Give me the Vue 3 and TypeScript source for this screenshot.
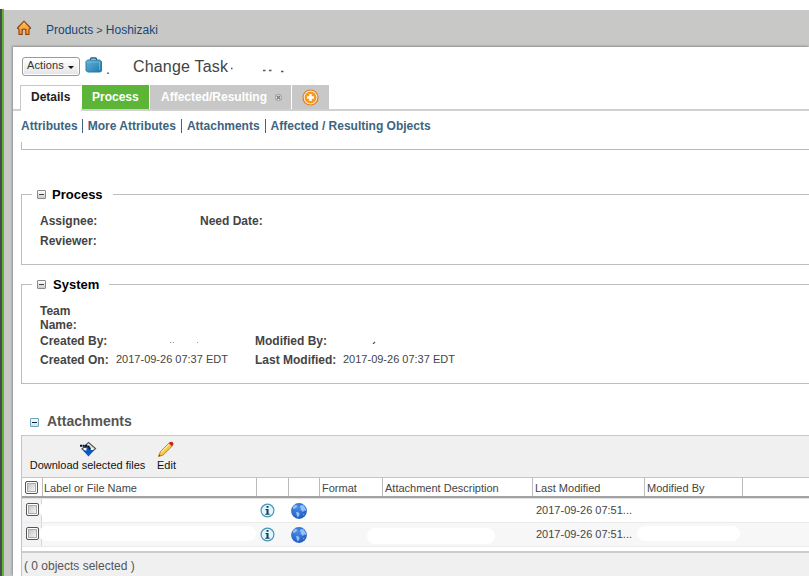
<script setup lang="ts">
const links: string[] = ['Attributes', 'More Attributes', 'Attachments', 'Affected / Resulting Objects']
const rows: { modified: string }[] = [{ modified: '2017-09-26 07:51...' }, { modified: '2017-09-26 07:51...' }]
</script>

<template>
  <div class="app">
    <div class="rail"></div>
    <div class="shell">
      <header class="crumbs">
        <svg class="home" width="16" height="16" viewBox="0 0 16 16">
          <defs>
            <linearGradient id="homeFill" x1="0" y1="0" x2="0" y2="1">
              <stop offset="0" stop-color="#ffc163" /><stop offset="1" stop-color="#f58a20" />
            </linearGradient>
          </defs>
          <path d="M8 1.2 14.6 8 13 9.3V14.5H9.8V9.2H6.2V14.5H3V9.3L1.4 8Z" fill="url(#homeFill)" stroke="#87420f" stroke-width="1.1" stroke-linejoin="round" />
        </svg>
        <a>Products</a><span class="sep">&gt;</span><a>Hoshizaki</a>
      </header>
      <main class="panel">
        <div class="titlebar">
          <button class="actions">Actions<i class="caret"></i></button>
          <svg class="case" width="18" height="16" viewBox="0 0 18 16">
            <defs>
              <linearGradient id="caseFill" x1="0" y1="0" x2="1" y2="1">
                <stop offset="0" stop-color="#65b4da" /><stop offset="1" stop-color="#1e78aa" />
              </linearGradient>
            </defs>
            <path d="M5.500 3.500V2Q5.500 1 6.500 1h4q1 0 1 1v1.500" fill="none" stroke="#245c78" stroke-width="1.3" />
            <path d="M1 4.500 2.500 3H14.500L16.500 4.500V14L15.500 15H2.500L1 13.500Z" fill="url(#caseFill)" stroke="#2b7da8" />
            <path d="M2 5H14.500V13" fill="none" stroke="#86c8e6" stroke-width=".6" />
          </svg>
          <span class="dot">.</span>
          <h1>Change Task</h1>
          <svg class="marks" width="56" height="8" viewBox="0 0 56 8">
            <path d="M1 3.500h1.500M33 5.500h2.500M39 5.500h2.500M51 6.500h2.500" stroke="#555" stroke-width="1.500" />
          </svg>
        </div>
        <nav class="tabs">
          <div class="tab current"><span>Details</span></div>
          <div class="tab process"><span>Process</span></div>
          <div class="tab affected">
            <span>Affected/Resulting</span>
            <svg width="7" height="7" viewBox="0 0 7 7"><rect x=".5" y=".5" width="6" height="6" rx="1" fill="#e4e4e4" stroke="#aaa" /><path d="M1.500 1.500l4 4M5.500 1.500l-4 4" stroke="#777" stroke-width="1.100" /></svg>
          </div>
          <div class="tab add">
            <svg width="17" height="17" viewBox="0 0 17 17">
              <circle cx="8.500" cy="8.500" r="7.500" fill="#fff0d5" stroke="#dd7d20" stroke-width="1.200" />
              <circle cx="8.500" cy="8.500" r="5.900" fill="#f7991e" />
              <path d="M8.500 5v7M5 8.500h7" stroke="#fff" stroke-width="2.400" />
            </svg>
          </div>
        </nav>
        <div class="links"><a v-for="l in links" :key="l">{{ l }}</a></div>
        <div class="stub"></div>

        <section class="group process-group">
          <div class="legend"><i class="line lead"></i><i class="toggle"></i><h2>Process</h2><i class="line"></i></div>
          <div class="fields">
            <div class="frow"><b class="a">Assignee:</b><b>Need Date:</b></div>
            <div class="frow"><b>Reviewer:</b></div>
          </div>
        </section>

        <section class="group system-group">
          <div class="legend"><i class="line lead"></i><i class="toggle"></i><h2>System</h2><i class="line"></i></div>
          <div class="fields">
            <div class="team"><b>Team<br />Name:</b></div>
            <div class="frow short">
              <b class="col">Created By:</b><b>Modified By:</b>
              <svg class="specks" width="240" height="8" viewBox="0 0 240 8"><path d="M0 6.500h1.500M3 6.500h1M27 6.500h1" stroke="#79a6c4" /><path d="M203 8l2-2" stroke="#456" stroke-width="1.200" /></svg>
            </div>
            <div class="frow tall">
              <b class="on">Created On:</b><span class="date">2017-09-26 07:37 EDT</span>
              <b class="lm">Last Modified:</b><span class="date">2017-09-26 07:37 EDT</span>
            </div>
          </div>
        </section>

        <div class="att-head"><i class="toggle blue"></i><h2>Attachments</h2></div>
        <section class="grid">
          <div class="toolbar">
            <div class="tool download">
              <svg width="18" height="17" viewBox="0 0 18 17">
                <path d="M3 8 9.500 1.500 16.500 7.500 10 13.500Z" fill="#fff" stroke="#555" stroke-width="1.200" />
                <path d="M10.500 4l3.500 3.500" stroke="#bbb" />
                <path d="M5 4.500h2q4.500 0 4.500 4.500H15L9.500 15.500 4 9.500H7.500V7H5Z" fill="#0759c8" />
                <path d="M1 4.800h6q3.800 0 3.800 4" fill="none" stroke="#111" stroke-width="1.900" stroke-dasharray="2 .5" />
              </svg>
              <span>Download selected files</span>
            </div>
            <div class="tool edit">
              <svg width="18" height="18" viewBox="0 0 18 18">
                <path d="M1 16.500 3 11.500 12 2.300 15.500 5.500 6 14.800Z" fill="#f4c74c" stroke="#aa7a17" stroke-width=".9" />
                <path d="M4 12 12.500 3.500" stroke="#ffeaa1" stroke-width="1.300" />
                <path d="M12 2.300 13.200 1Q15 .2 16.200 1.300 17.400 2.600 16.600 4.300L15.500 5.500Z" fill="#c9251f" />
                <path d="M1 16.500l.9-2.300 1.500 1.500Z" fill="#6c4a15" />
              </svg>
              <span>Edit</span>
            </div>
          </div>
          <div class="cols head">
            <div><i class="check"></i></div><div><span>Label or File Name</span></div><div></div><div></div>
            <div><span>Format</span></div><div><span>Attachment Description</span></div>
            <div><span>Last Modified</span></div><div><span>Modified By</span></div><div></div>
          </div>
          <div v-for="(r, i) in rows" :key="i" class="cols row" :class="{ alt: i === 1 }">
            <div class="select"><i class="check"></i></div>
            <div><i class="blank wide"></i></div>
            <div>
              <svg class="info" width="15" height="15" viewBox="0 0 15 15">
                <circle cx="7.500" cy="7.500" r="6.400" fill="#e0f5fd" stroke="#4a95b8" stroke-width="1.200" />
                <path d="M6.500 3h2v1.800h-2ZM5.500 6h3v4.700h1.200v1H5.300v-1h1.200V7h-1Z" fill="#123f55" />
              </svg>
            </div>
            <div>
              <svg class="globe" width="16" height="16" viewBox="0 0 16 16">
                <defs><radialGradient id="sea" cx=".4" cy=".3" r=".75"><stop offset="0" stop-color="#4a8be8" /><stop offset="1" stop-color="#2058bd" /></radialGradient></defs>
                <circle cx="8" cy="8" r="7.900" fill="url(#sea)" />
                <path d="M2 4 4 2 6.500 2.500 5.500 4.500 4 5.500 2 6ZM9.500 2.500 12 2 14.500 5 15 8 13 7.500 12 9 10.500 7.500 9.500 7 10 5 8.500 4.500ZM5 9 8 9.500 8.500 11.500 7 14.500 6 13ZM12 11.500l1.500-1-.7 2Z" fill="#92c2f3" />
              </svg>
            </div>
            <div></div><div><i v-if="i === 1" class="blank desc"></i></div>
            <div><span class="when">{{ r.modified }}</span></div>
            <div><i v-if="i === 1" class="blank by"></i></div><div></div>
          </div>
          <div class="grid-foot"><span>( 0 objects selected )</span></div>
        </section>
      </main>
    </div>
  </div>
</template>

<style>
body { margin: 0; overflow: hidden; background: #fff; }
</style>

<style scoped>
* { box-sizing: border-box; }
.app { width: 809px; height: 576px; padding-top: 9px; display: flex; overflow: hidden; font: 12px/14px "Liberation Sans", Arial, sans-serif; color: #444; background: #fff; white-space: nowrap; }
.rail { width: 4px; background: linear-gradient(90deg, #4a4a4a 2px, #5db739 2px); flex: none; }
.shell { flex: 1; min-width: 0; margin-top: 1px; display: flex; flex-direction: column; background: #c8c9c7; }
.crumbs { height: 37px; flex: none; display: flex; align-items: center; padding: 3px 0 0 12px; color: #444; }
.crumbs a { color: #17457a; }
.crumbs .home { margin: -4px 14px 0 0; }
.crumbs .sep { margin: 0 3px; font-size: 11px; }
.panel { flex: 1; min-height: 0; margin-left: 9px; background: #fff; box-shadow: -1px -1px 2px #8e8f8e; display: flex; flex-direction: column; }
.titlebar { height: 38px; flex: none; display: flex; align-items: center; padding-left: 9px; }
.actions { width: 58px; height: 19px; padding: 0 5px 2px 4px; display: flex; align-items: center; justify-content: space-between; border: 1px solid #999; border-radius: 3px; box-shadow: inset 0 0 0 1px #fff; background: linear-gradient(#fff, #e4e4e4); font: 11px "Liberation Sans", Arial, sans-serif; letter-spacing: .1px; color: #333; }
.caret { border: 3px solid transparent; border-top-color: #111; border-bottom: 0; margin-top: 4px; }
.case { margin: -2px 0 0 5px; }
.dot { margin: 5px 0 0 3px; font-size: 14px; }
h1, h2 { margin: 0; }
h1 { font: 16px/20px "Liberation Sans", Arial, sans-serif; margin: 2px 0 0 23px; letter-spacing: .2px; color: #444; }
.marks { margin: 5px 0 0 2px; }
.tabs { height: 26px; flex: none; display: flex; align-items: flex-start; padding-left: 7px; border-bottom: 2px solid #d0d0d0; font-weight: bold; }
.tab { height: 24px; display: flex; align-items: center; color: #fff; background: #c8c8c8; }
.current { width: 61px; height: 26px; padding: 0 0 3px 10px; border: 1px solid #c8c8c8; border-width: 1px 0 0 1px; color: #222; background: #fff; margin-right: 1px; }
.process { width: 67px; padding-left: 10px; background: #5cb536; margin-right: 1px; }
.affected { width: 141px; padding-left: 11px; margin-right: 1px; }
.affected svg { margin: 1px 0 0 8px; }
.add { width: 37px; justify-content: center; }
.links { height: 31px; flex: none; display: flex; align-items: flex-start; padding: 8px 0 0 8px; font-weight: bold; color: #3d6480; }
.links a + a { border-left: 1px solid #3d6480; margin-left: 4px; padding-left: 5px; }
.links a:nth-child(n + 3) { margin-left: 5px; }
.stub { height: 8px; flex: none; margin-left: 8px; border: 1px solid #bbb; border-width: 0 0 1px 1px; }
.group { flex: none; margin-left: 8px; border: 1px solid #bdbdbd; border-width: 0 0 1px 1px; }
.process-group { height: 71px; margin-top: 44px; }
.system-group { height: 100px; margin-top: 19px; }
.legend { height: 1px; display: flex; align-items: center; }
.line { height: 1px; flex: 1; background: #bdbdbd; margin-left: 10px; }
.lead { width: 10px; flex: none; margin: 0 5px 0 0; }
.legend h2, .att-head h2 { font-weight: bold; font-size: 13px; line-height: 16px; color: #000; margin-left: 6px; }
.system-group h2 { margin-left: 7px; }
.toggle { width: 9px; height: 9px; flex: none; border: 1px solid #888; border-radius: 1px; background: linear-gradient(#444, #444) center/5px 1px no-repeat, linear-gradient(#fff, #ccc); }
.toggle.blue { border-color: #6ba3bf; background: linear-gradient(#123, #123) center/5px 1px no-repeat, linear-gradient(#fff, #c8e5f3); margin-top: 2px; }
.fields { padding: 19px 0 0 18px; }
.frow { height: 20px; display: flex; position: relative; }
.a { width: 160px; }
.team { height: 30px; }
.short { height: 18px; }
.col { width: 215px; }
.on { width: 76px; }
.lm { width: 88px; margin-left: 27px; }
.tall { padding-top: 1px; }
.specks { position: absolute; left: 130px; top: 2px; }
.date { font-size: 11px; line-height: 13px; width: 112px; }
.att-head { height: 51px; flex: none; display: flex; align-items: center; padding: 24px 0 0 17px; }
.att-head h2 { font-size: 14px; color: #555; margin: -1px 0 0 8px; }
.grid { margin-left: 8px; flex: none; border-left: 1px solid #c4c4c4; border-top: 1px solid #c8c8c8; }
.toolbar { height: 41px; background: #f0f0f0; display: flex; font-size: 11px; color: #111; padding: 5px 0 0 8px; }
.tool { display: flex; flex-direction: column; align-items: center; }
.tool svg { height: 17px; }
.download { width: 115px; margin-right: 12px; }
.cols { display: grid; grid-template-columns: 20px 214px 32px 31px 63px 150px 112px 98px 1fr; font-size: 11px; }
.cols > div { position: relative; display: flex; align-items: center; }
.head { height: 21px; border-top: 1px solid #c4c4c4; border-bottom: 2px solid #a2a2a2; }
.head > div + div { border-left: 1px solid #bbb; padding-left: 2px; }
.head > div:nth-child(2) { padding-left: 1px; }
.head span { padding-top: 2px; }
.row { height: 24px; border-bottom: 1px solid #ebebeb; }
.head + .row { height: 25px; border-top: 1px solid #e2e2e2; }
.alt { background: #f7f7f7; }
.check { width: 13px; height: 13px; margin-left: 3px; border: 1px solid #555; border-radius: 2px; background: linear-gradient(135deg, #bbb, #fff); box-shadow: inset 0 0 0 1px #fff, inset 0 0 0 2px #aaa; }
.select { background: #f3f3f6; border-right: 1px solid #d8d8dc; }
.select .check { margin: -2px 0 0 4px; }
.info { margin-left: 4px; }
.globe { margin-left: 3px; }
.when { padding: 0 0 1px 4px; }
.blank { position: absolute; background: #fff; border-radius: 9px; }
.wide { left: -3px; top: 3px; width: 217px; height: 15px; }
.desc { left: -15px; top: 5px; width: 128px; height: 16px; }
.by { left: -7px; top: 3px; width: 103px; height: 15px; }
.grid-foot { height: 40px; margin-top: 4px; padding: 6px 0 0 2px; background: #f0f0f0; border-top: 2px solid #ccc; color: #555; }
</style>
